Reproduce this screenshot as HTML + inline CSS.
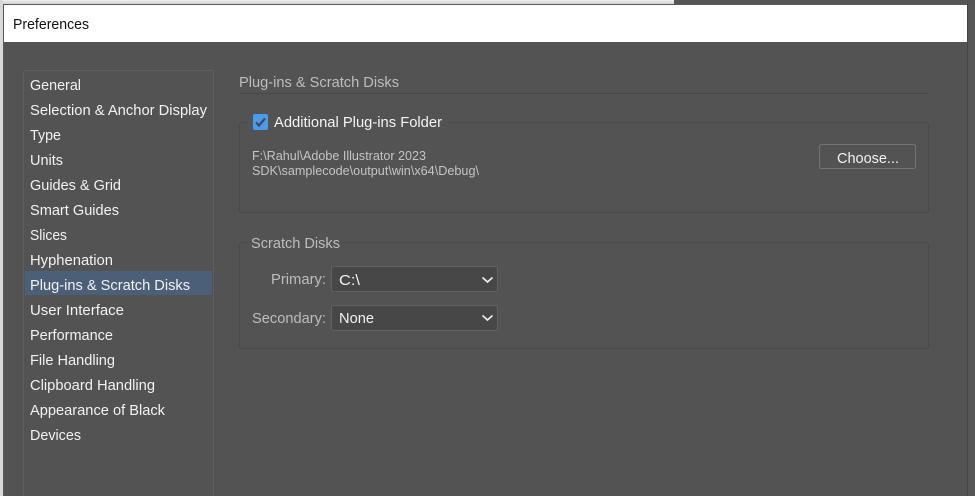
<!DOCTYPE html>
<html><head><meta charset="utf-8"><title>Preferences</title>
<style>
html,body{margin:0;padding:0;width:975px;height:496px;overflow:hidden;background:#535353}
svg{display:block;position:absolute;left:0;top:0}
text{font-family:"Liberation Sans",sans-serif;font-size:15px;fill:#f2f2f2}
.s{font-size:12.5px;fill:#c4c4c4}
.h{fill:#bdbdbd}
</style></head><body>
<svg width="975" height="496" viewBox="0 0 975 496" xmlns="http://www.w3.org/2000/svg">
<defs><linearGradient id="t" x1="0" y1="0" x2="0" y2="1"><stop offset="0" stop-color="#f0f0f0"/><stop offset="1" stop-color="#d2d2d2"/></linearGradient></defs>
<rect x="0" y="0" width="975" height="496" fill="#535353"/>
<rect x="0" y="0" width="674" height="4" fill="url(#t)"/>
<rect x="0" y="0" width="3" height="496" fill="#d8d8d8"/>
<rect x="674" y="0" width="301" height="4" fill="#555"/>
<rect x="3" y="4" width="965" height="1" fill="#5a5a5a"/>
<rect x="3" y="4" width="1" height="492" fill="#5a5a5a"/>
<rect x="967" y="4" width="1" height="492" fill="#444"/>
<rect x="968" y="4" width="7" height="492" fill="#565656"/>
<rect x="4" y="5" width="963" height="37" fill="#fff"/>
<text x="13" y="29" textLength="76" lengthAdjust="spacingAndGlyphs" style="fill:#111">Preferences</text>

<rect x="23.5" y="70.5" width="190" height="440" rx="2" fill="#535353" stroke="#5e5e5e"/>
<rect x="25" y="271" width="187" height="24" fill="#4b6078"/>
<text x="30" y="90" textLength="51" lengthAdjust="spacingAndGlyphs">General</text>
<text x="30" y="115" textLength="177" lengthAdjust="spacingAndGlyphs">Selection &amp; Anchor Display</text>
<text x="30" y="140" textLength="31" lengthAdjust="spacingAndGlyphs">Type</text>
<text x="30" y="165" textLength="33" lengthAdjust="spacingAndGlyphs">Units</text>
<text x="30" y="190" textLength="91" lengthAdjust="spacingAndGlyphs">Guides &amp; Grid</text>
<text x="30" y="215" textLength="89" lengthAdjust="spacingAndGlyphs">Smart Guides</text>
<text x="30" y="240" textLength="37" lengthAdjust="spacingAndGlyphs">Slices</text>
<text x="30" y="265" textLength="83" lengthAdjust="spacingAndGlyphs">Hyphenation</text>
<text x="30" y="290" textLength="160" lengthAdjust="spacingAndGlyphs">Plug-ins &amp; Scratch Disks</text>
<text x="30" y="315" textLength="94" lengthAdjust="spacingAndGlyphs">User Interface</text>
<text x="30" y="340" textLength="83" lengthAdjust="spacingAndGlyphs">Performance</text>
<text x="30" y="365" textLength="85" lengthAdjust="spacingAndGlyphs">File Handling</text>
<text x="30" y="390" textLength="125" lengthAdjust="spacingAndGlyphs">Clipboard Handling</text>
<text x="30" y="415" textLength="135" lengthAdjust="spacingAndGlyphs">Appearance of Black</text>
<text x="30" y="440" textLength="51" lengthAdjust="spacingAndGlyphs">Devices</text>

<text class="h" x="239" y="87" textLength="160" lengthAdjust="spacingAndGlyphs">Plug-ins &amp; Scratch Disks</text>
<rect x="239" y="93" width="690" height="1" fill="#494949"/>

<rect x="239.5" y="122.5" width="689" height="90" rx="2" fill="none" stroke="#4b4b4b"/>
<rect x="248" y="118" width="199" height="9" fill="#535353"/>
<rect x="253" y="114" width="15" height="16" rx="2" fill="#4a9bf0"/>
<path d="M256 122.5l3 3 6-7" fill="none" stroke="#3f4a55" stroke-width="2.2"/>
<text x="274" y="127" textLength="168" lengthAdjust="spacingAndGlyphs" style="fill:#f4f4f4">Additional Plug-ins Folder</text>
<text class="s" x="252" y="160" textLength="174" lengthAdjust="spacingAndGlyphs">F:\Rahul\Adobe Illustrator 2023</text>
<text class="s" x="252" y="175" textLength="227" lengthAdjust="spacingAndGlyphs">SDK\samplecode\output\win\x64\Debug\</text>
<rect x="819.5" y="144.5" width="96" height="24" rx="2" fill="#535353" stroke="#757575"/>
<text x="837" y="163" textLength="62" lengthAdjust="spacingAndGlyphs">Choose...</text>

<rect x="239.5" y="242.5" width="689" height="106" rx="2" fill="none" stroke="#4b4b4b"/>
<rect x="248" y="238" width="95" height="9" fill="#535353"/>
<text class="h" x="251" y="248" textLength="89" lengthAdjust="spacingAndGlyphs">Scratch Disks</text>
<text class="h" x="271" y="284" textLength="55" lengthAdjust="spacingAndGlyphs">Primary:</text>
<rect x="331.5" y="266.5" width="166" height="25" rx="2" fill="#474747" stroke="#626262"/>
<text x="339" y="285" textLength="21" lengthAdjust="spacingAndGlyphs">C:\</text>
<path d="M482.5 277.5l5 4.5 5-4.5" fill="none" stroke="#f0f0f0" stroke-width="1.6"/>
<text class="h" x="252" y="323" textLength="74" lengthAdjust="spacingAndGlyphs">Secondary:</text>
<rect x="331.5" y="305.5" width="166" height="25" rx="2" fill="#474747" stroke="#626262"/>
<text x="339" y="323" textLength="35" lengthAdjust="spacingAndGlyphs">None</text>
<path d="M482.5 315.5l5 4.5 5-4.5" fill="none" stroke="#f0f0f0" stroke-width="1.6"/>
</svg>
</body></html>
